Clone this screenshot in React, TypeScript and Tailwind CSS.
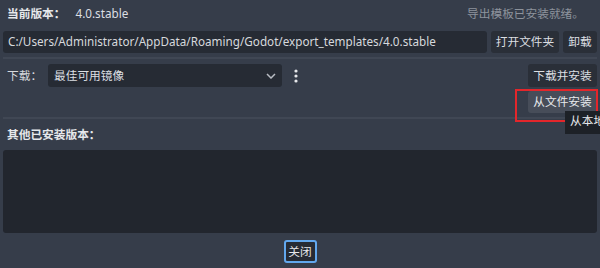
import React from 'react';

const font = { fontFamily: '"Noto Sans", "Noto Sans CJK SC", sans-serif' };

function Btn({ children, hover = false, className = '' }: { children: React.ReactNode; hover?: boolean; className?: string }) {
  return (
    <div
      className={`flex items-center justify-center whitespace-nowrap rounded-[3px] ${
        hover ? 'bg-[#474d59] text-[#e8eaed]' : 'bg-[#2a2f38] text-[#dcdfe3]'
      } ${className}`}
    >
      {children}
    </div>
  );
}

export default function App() {
  return (
    <div
      className="relative w-[600px] h-[268px] overflow-hidden bg-[#363d4a] text-[11.7px] leading-none text-[#dcdfe3] px-[3px] flex flex-col"
      style={font}
    >
      {/* Current version */}
      <div className="h-[28px] flex items-center justify-between px-[4px]">
        <div className="flex items-center">
          <span className="font-bold text-[#e6e8eb]">当前版本：</span>
          <span className="ml-[10px]">4.0.stable</span>
        </div>
        <span className="text-[#8d939c] mr-[9px]">导出模板已安装就绪。</span>
      </div>

      {/* Path row */}
      <div className="mt-[3px] h-[22px] flex gap-[4px]">
        <div className="flex-1 flex items-center bg-[#262b34] rounded-[3px] px-[5px] whitespace-nowrap text-[#d6d9dd]">
          C:/Users/Administrator/AppData/Roaming/Godot/export_templates/4.0.stable
        </div>
        <Btn className="w-[68px]">打开文件夹</Btn>
        <Btn className="w-[34px]">卸载</Btn>
      </div>

      <div className="mt-[4px] h-[2px] bg-[#404754]" />

      {/* Download row */}
      <div className="mt-[5px] flex justify-between">
        <div className="flex items-start">
          <div className="h-[23px] flex items-center pl-[4px] w-[45px] text-[#d6d9dd]">下载：</div>
          <div className="w-[234px] h-[23px] flex items-center justify-between bg-[#262b34] rounded-[3px] pl-[6px] pr-[6px]">
            <span>最佳可用镜像</span>
            <svg width="10" height="6" viewBox="0 0 10 6" fill="none">
              <path d="M1 1l4 4 4-4" stroke="#b8bcc3" strokeWidth="1.5" />
            </svg>
          </div>
          <div className="h-[23px] w-[28px] flex items-center justify-center">
            <svg width="4" height="14" viewBox="0 0 4 14">
              <circle cx="2" cy="2" r="1.6" fill="#e6e8eb" />
              <circle cx="2" cy="7" r="1.6" fill="#e6e8eb" />
              <circle cx="2" cy="12" r="1.6" fill="#e6e8eb" />
            </svg>
          </div>
        </div>
        <div className="flex flex-col items-end gap-[4px]">
          <Btn className="w-[69px] h-[23px]">下载并安装</Btn>
          <Btn hover className="w-[69px] h-[22px]">从文件安装</Btn>
        </div>
      </div>

      <div className="mt-[4px] h-[2px] bg-[#404754]" />

      {/* Other versions */}
      <div className="h-[31px] flex items-center px-[4px] font-bold text-[#e6e8eb]">其他已安装版本：</div>
      <div className="h-[83px] bg-[#22262e] rounded-[3px]" />

      <div className="mt-[7px] flex justify-center">
        <div className="w-[33px] h-[23px] flex items-center justify-center whitespace-nowrap bg-[#262b34] border-2 border-[#62a8ee] rounded-[3px] text-[#e6e8eb]">
          关闭
        </div>
      </div>

      {/* Highlight box */}
      <div className="absolute left-[515px] top-[89px] w-[83px] h-[33px] border-2 border-[#e3262b]" />

      {/* Tooltip */}
      <div className="absolute left-[565px] top-[111px] h-[23px] bg-[#1d2127] flex items-start pt-[4px] pl-[5px] pr-[6px] whitespace-nowrap text-[#e6e8eb]">
        从本地文件安装
      </div>
    </div>
  );
}
